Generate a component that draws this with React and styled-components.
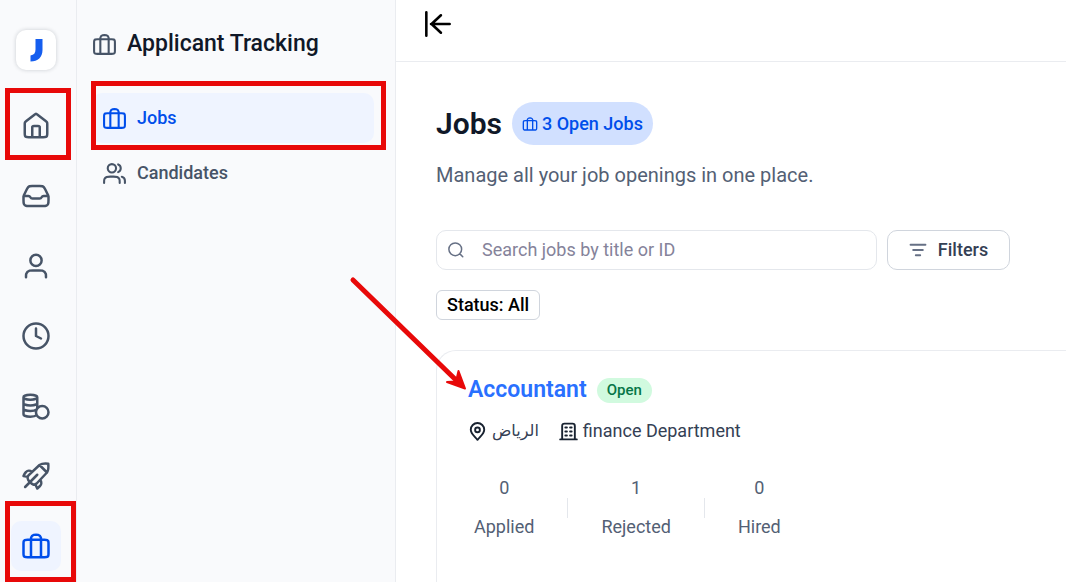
import styled, { createGlobalStyle } from "styled-components";

const GlobalStyle = createGlobalStyle`
    *, *::before, *::after {
        box-sizing: border-box;
    }
    body {
        margin: 0;
        background: #ffffff;
        color: #536074;
        font-family: Roboto, "Noto Sans", "DejaVu Sans", sans-serif;
        font-size: 18px;
        line-height: 24px;
    }
    h1, h2, h3, p, ul, dl, dd {
        margin: 0;
        padding: 0;
    }
    a {
        color: inherit;
        text-decoration: none;
    }
    button, input {
        font: inherit;
    }
`;

const Page = styled.div`
    display: flex;
    min-height: 100vh;
    max-height: 100vh;
    overflow: hidden;
`;

const Svg = styled.svg`
    display: block;
    flex: none;
    width: ${(p) => p.$size || 24}px;
    height: ${(p) => p.$size || 24}px;
    fill: none;
    stroke: currentColor;
    stroke-width: ${(p) => p.$stroke || 2};
    stroke-linecap: round;
    stroke-linejoin: round;
`;

const Rail = styled.nav`
    display: flex;
    flex-direction: column;
    flex: none;
    gap: 31px;
    width: 77px;
    padding: 30px 15px 0 11px;
    background: #f9fafc;
    border-right: 1px solid #eaecf0;
`;

const Logo = styled.a`
    display: flex;
    align-items: center;
    justify-content: center;
    align-self: center;
    width: 40px;
    height: 40px;
    background: #ffffff;
    border-radius: 10px;
    box-shadow: 0 0 4px rgba(16, 24, 40, 0.2);
`;

const RailList = styled.ul`
    display: flex;
    flex-direction: column;
    gap: 20px;
    list-style: none;
`;

const RailItem = styled.li`
    position: relative;
`;

const RailLink = styled.a`
    display: flex;
    align-items: center;
    justify-content: center;
    height: 50px;
    border-radius: 10px;
    color: ${(p) => (p.$active ? "#004eeb" : "#475467")};
    background: ${(p) => (p.$active ? "#eff4ff" : "transparent")};
`;

const Mark = styled.span`
    position: absolute;
    inset: ${(p) => p.$inset};
    z-index: 2;
    border: 5px solid #e80909;
    pointer-events: none;
`;

const Panel = styled.aside`
    flex: none;
    width: 319px;
    padding: 29px 21px 0 15px;
    background: #f9fafc;
    border-right: 1px solid #eaecf0;
`;

const PanelTitle = styled.h2`
    display: flex;
    align-items: center;
    gap: 10px;
    margin-bottom: 34px;
    color: #475467;
    font-size: 23px;
    font-weight: 500;
    line-height: 30px;

    span {
        color: #101828;
    }
`;

const PanelList = styled.ul`
    display: flex;
    flex-direction: column;
    gap: 5px;
    list-style: none;
`;

const PanelItem = styled.li`
    position: relative;
`;

const PanelLink = styled.a`
    display: flex;
    align-items: center;
    gap: 10px;
    height: 50px;
    padding: 0 10px;
    border-radius: 10px;
    font-weight: 500;
    color: ${(p) => (p.$active ? "#004eeb" : "#475467")};
    background: ${(p) => (p.$active ? "#eff4ff" : "transparent")};
`;

const Main = styled.main`
    flex: 1;
    min-width: 0;
`;

const TopBar = styled.header`
    display: flex;
    height: 62px;
    padding: 10px 28px;
    border-bottom: 1px solid #eaecf0;
`;

const IconButton = styled.button`
    align-self: flex-start;
    padding: 0;
    border: 0;
    background: none;
    color: #000000;
`;

const Content = styled.div`
    padding: 40px 0 0 40px;
`;

const Heading = styled.div`
    display: flex;
    align-items: center;
    gap: 10px;
`;

const Title = styled.h1`
    color: #101828;
    font-size: 30px;
    font-weight: 600;
    line-height: 40px;
`;

const CountBadge = styled.span`
    display: flex;
    align-items: center;
    gap: 4px;
    height: 43px;
    padding: 0 10px;
    border-radius: 22px;
    background: #d1e0ff;
    color: #004eeb;
    font-weight: 500;
`;

const Subtitle = styled.p`
    margin-top: 15px;
    font-size: 20px;
    line-height: 30px;
`;

const Toolbar = styled.form`
    display: flex;
    gap: 10px;
    margin: 40px 56px 20px 0;
`;

const SearchBox = styled.label`
    display: flex;
    align-items: center;
    flex: 1;
    gap: 17px;
    height: 40px;
    padding: 0 10px;
    border: 1px solid #e4e7ec;
    border-radius: 10px;
    color: #667085;
`;

const SearchInput = styled.input`
    flex: 1;
    min-width: 0;
    padding: 0;
    border: 0;
    outline: 0;
    background: none;
    color: #101828;

    &::placeholder {
        color: #85839a;
        opacity: 1;
    }
`;

const FilterButton = styled.button`
    display: flex;
    align-items: center;
    justify-content: center;
    gap: 11px;
    width: 123px;
    height: 40px;
    padding: 0;
    border: 1px solid #d0d5dd;
    border-radius: 10px;
    background: #ffffff;
    color: #344054;
    font-weight: 500;

    svg {
        color: #667085;
    }
`;

const StatusButton = styled.button`
    display: block;
    height: 30px;
    padding: 0 10px;
    border: 1px solid #d0d5dd;
    border-radius: 6px;
    background: #ffffff;
    color: #000000;
    font-weight: 500;
    line-height: 26px;
`;

const Card = styled.article`
    height: 300px;
    margin-top: 30px;
    padding: 24px 31px;
    border: 1px solid #eaecf0;
    border-right: 0;
    border-radius: 20px 0 0 20px;
`;

const CardHead = styled.div`
    position: relative;
    display: flex;
    align-items: center;
    gap: 10px;
`;

const JobTitle = styled.h3`
    color: #2970ff;
    font-size: 23px;
    font-weight: 600;
    line-height: 30px;
`;

const OpenBadge = styled.span`
    padding: 0 10px;
    border-radius: 13px;
    background: #d1fadf;
    color: #067647;
    font-size: 15px;
    font-weight: 500;
    line-height: 25px;
`;

const Arrow = styled.svg`
    position: absolute;
    right: 100%;
    bottom: 13px;
    z-index: 3;
    width: 120px;
    height: 118px;
    pointer-events: none;
`;

const Meta = styled.div`
    display: flex;
    gap: 20px;
    margin-top: 14px;
    color: #344054;
`;

const MetaItem = styled.span`
    display: flex;
    align-items: center;
    gap: 5px;

    svg {
        color: #182230;
    }
`;

const City = styled.span`
    font-size: 16px;
`;

const Stats = styled.dl`
    display: flex;
    align-items: center;
    gap: 33px;
    margin: 33px 0 0 6px;
`;

const Stat = styled.div`
    display: flex;
    flex-direction: column-reverse;
    align-items: center;
    gap: 15px;
`;

const Divider = styled.span`
    width: 1px;
    height: 20px;
    background: #e4e7ec;
`;

const icons = {
    home: "M9 21V13.6C9 13.04 9 12.76 9.11 12.55C9.2 12.36 9.36 12.2 9.55 12.11C9.76 12 10.04 12 10.6 12H13.4C13.96 12 14.24 12 14.45 12.11C14.64 12.2 14.8 12.36 14.89 12.55C15 12.76 15 13.04 15 13.6V21M11.02 2.76L4.24 8.04C3.78 8.39 3.56 8.57 3.39 8.79C3.25 8.98 3.14 9.2 3.07 9.44C3 9.7 3 9.99 3 10.57V17.8C3 18.92 3 19.48 3.22 19.91C3.41 20.28 3.72 20.59 4.09 20.78C4.52 21 5.08 21 6.2 21H17.8C18.92 21 19.48 21 19.91 20.78C20.28 20.59 20.59 20.28 20.78 19.91C21 19.48 21 18.92 21 17.8V10.57C21 9.99 21 9.7 20.93 9.44C20.86 9.2 20.75 8.98 20.61 8.79C20.44 8.57 20.22 8.39 19.76 8.04L12.98 2.76C12.63 2.49 12.46 2.35 12.26 2.3C12.09 2.26 11.91 2.26 11.74 2.3C11.54 2.35 11.37 2.49 11.02 2.76Z",
    inbox: "M2.5 12H5.88C6.57 12 7.19 12.39 7.5 13C7.81 13.61 8.43 14 9.12 14H14.88C15.57 14 16.19 13.61 16.5 13C16.81 12.39 17.43 12 18.12 12H21.5M8.97 4H15.03C16.11 4 16.65 4 17.12 4.16C17.54 4.31 17.93 4.55 18.25 4.86C18.6 5.21 18.85 5.69 19.33 6.65L21.49 10.99C21.68 11.36 21.78 11.55 21.84 11.75C21.9 11.93 21.95 12.11 21.97 12.29C22 12.5 22 12.71 22 13.13V15.2C22 16.88 22 17.72 21.67 18.36C21.39 18.93 20.93 19.39 20.36 19.67C19.72 20 18.88 20 17.2 20H6.8C5.12 20 4.28 20 3.64 19.67C3.07 19.39 2.61 18.93 2.33 18.36C2 17.72 2 16.88 2 15.2V13.13C2 12.71 2 12.5 2.03 12.29C2.05 12.11 2.1 11.93 2.16 11.75C2.22 11.55 2.32 11.36 2.51 10.99L4.67 6.65C5.15 5.69 5.4 5.21 5.75 4.86C6.07 4.55 6.46 4.31 6.88 4.16C7.35 4 7.89 4 8.97 4Z",
    user: "M20 21C20 19.6 20 18.91 19.83 18.34C19.44 17.06 18.44 16.06 17.16 15.67C16.59 15.5 15.9 15.5 14.5 15.5H9.5C8.1 15.5 7.41 15.5 6.84 15.67C5.56 16.06 4.56 17.06 4.17 18.34C4 18.91 4 19.6 4 21M16.5 7.5A4.5 4.5 0 1 1 7.5 7.5A4.5 4.5 0 0 1 16.5 7.5Z",
    clock: "M12 6V12L16 14M22 12A10 10 0 1 1 2 12A10 10 0 0 1 22 12Z",
    coins: "M12 17A5 5 0 1 0 22 17A5 5 0 0 0 12 17ZM12 17C12 15.87 12.37 14.84 13 14V5M12 17C12 17.83 12.2 18.6 12.55 19.29C11.71 20 9.77 20.5 7.5 20.5C4.46 20.5 2 19.6 2 18.5V5M13 5C13 6.1 10.54 7 7.5 7C4.46 7 2 6.1 2 5M13 5C13 3.9 10.54 3 7.5 3C4.46 3 2 3.9 2 5M2 14C2 15.1 4.46 16 7.5 16C9.69 16 11.58 15.54 12.46 14.86M13 9.5C13 10.6 10.54 11.5 7.5 11.5C4.46 11.5 2 10.6 2 9.5",
    rocket: "M3.3 20.8L13 11M14.8 3.2L20.8 9.2M6 11.5L14.8 3.2C16.6 2 19 1.9 21.8 2.2C22.1 5 22 7.4 20.8 9.2L12.5 18C10.6 19.8 8.8 18.6 7.2 16.9C5.5 15.2 4.2 13.4 6 11.5ZM8.7 8.6C7.2 7.4 5.2 7.5 4 8.8C3 9.8 2.4 11 2 12L5.4 12.7M15.4 15.3C16.6 16.8 16.5 18.8 15.2 20C14.2 21 13.5 21.5 13 22L11.4 18.6",
    suitcase: "M8 21V7C8 6.07 8 5.6 8.1 5.22C8.38 4.19 9.19 3.38 10.22 3.1C10.6 3 11.07 3 12 3C12.93 3 13.4 3 13.78 3.1C14.81 3.38 15.62 4.19 15.9 5.22C16 5.6 16 6.07 16 7V21M5.2 21H18.8C19.92 21 20.48 21 20.91 20.78C21.28 20.59 21.59 20.28 21.78 19.91C22 19.48 22 18.92 22 17.8V10.2C22 9.08 22 8.52 21.78 8.09C21.59 7.72 21.28 7.41 20.91 7.22C20.48 7 19.92 7 18.8 7H5.2C4.08 7 3.52 7 3.09 7.22C2.72 7.41 2.41 7.72 2.22 8.09C2 8.52 2 9.08 2 10.2V17.8C2 18.92 2 19.48 2.22 19.91C2.41 20.28 2.72 20.59 3.09 20.78C3.52 21 4.08 21 5.2 21Z",
    users: "M22 21V19C22 17.14 20.73 15.57 19 15.13M15.5 3.29C16.97 3.88 18 5.32 18 7C18 8.68 16.97 10.12 15.5 10.71M17 21C17 19.14 17 18.2 16.7 17.47C16.29 16.49 15.51 15.71 14.53 15.3C13.8 15 12.86 15 11 15H8C6.14 15 5.2 15 4.47 15.3C3.49 15.71 2.71 16.49 2.3 17.47C2 18.2 2 19.14 2 21M13.5 7A4 4 0 1 1 5.5 7A4 4 0 0 1 13.5 7Z",
    collapse: "M2 2V22M22 12H6M14.5 4.5L6.5 12L14.5 19.5",
    search: "M21 21L17.2 17.2M19.5 11A8.5 8.5 0 1 1 2.5 11A8.5 8.5 0 0 1 19.5 11Z",
    filter: "M2 5H22M5.5 12H18.5M9 19H15",
    pin: "M12 22.5C15 18.5 20.5 15 20.5 9.8A8.5 8.5 0 0 0 3.5 9.8C3.5 15 9 18.5 12 22.5ZM15 10A3 3 0 1 1 9 10A3 3 0 0 1 15 10Z",
    building: "M1.5 22H22.5M4 22V5C4 3 5 2 7 2H17C19 2 20 3 20 5V22M8 7H10M8 12H10M8 17H10M14 7H16M14 12H16M14 17H16",
};

function Icon({ name, size, stroke }) {
    return (
        <Svg viewBox="0 0 24 24" $size={size} $stroke={stroke} aria-hidden="true">
            <path d={icons[name]} />
        </Svg>
    );
}

const railItems = [
    { name: "Home", icon: "home", mark: "-13px -10px -9px -6px" },
    { name: "Inbox", icon: "inbox" },
    { name: "People", icon: "user" },
    { name: "Time", icon: "clock" },
    { name: "Payroll", icon: "coins" },
    { name: "Performance", icon: "rocket" },
    { name: "Hiring", icon: "suitcase", active: true, mark: "-20px -15px -11px -6px" },
];

const panelItems = [
    { name: "Jobs", icon: "suitcase", active: true, mark: "-12px -12px -7px -1px" },
    { name: "Candidates", icon: "users" },
];

export default function App() {
    return (
        <>
            <GlobalStyle />
            <Page>
                <Rail aria-label="Modules">
                    <Logo href="#" aria-label="Dashboard">
                        <svg width="13" height="23" viewBox="0 0 13 23" aria-hidden="true">
                            <path d="M5.5 0H12.5V11C12.5 18 8 22.5 0.5 22.5V16.5C4 16 5.5 14 5.5 10.5Z" fill="#155eef" />
                        </svg>
                    </Logo>
                    <RailList>
                        {railItems.map((item) => (
                            <RailItem key={item.name}>
                                <RailLink href="#" $active={item.active} aria-label={item.name}>
                                    <Icon name={item.icon} size={30} stroke={2} />
                                </RailLink>
                                {item.mark && <Mark $inset={item.mark} />}
                            </RailItem>
                        ))}
                    </RailList>
                </Rail>

                <Panel>
                    <PanelTitle>
                        <Icon name="suitcase" size={25} stroke={2} />
                        <span>Applicant Tracking</span>
                    </PanelTitle>
                    <PanelList>
                        {panelItems.map((item) => (
                            <PanelItem key={item.name}>
                                <PanelLink href="#" $active={item.active}>
                                    <Icon name={item.icon} size={25} stroke={2} />
                                    {item.name}
                                </PanelLink>
                                {item.mark && <Mark $inset={item.mark} />}
                            </PanelItem>
                        ))}
                    </PanelList>
                </Panel>

                <Main>
                    <TopBar>
                        <IconButton type="button" aria-label="Collapse sidebar">
                            <Icon name="collapse" size={28} stroke={2.2} />
                        </IconButton>
                    </TopBar>
                    <Content>
                        <Heading>
                            <Title>Jobs</Title>
                            <CountBadge>
                                <Icon name="suitcase" size={16} stroke={2} />
                                3 Open Jobs
                            </CountBadge>
                        </Heading>
                        <Subtitle>Manage all your job openings in one place.</Subtitle>

                        <Toolbar>
                            <SearchBox>
                                <Icon name="search" size={18} stroke={2} />
                                <SearchInput type="text" aria-label="Search jobs" placeholder="Search jobs by title or ID" />
                            </SearchBox>
                            <FilterButton type="button">
                                <Icon name="filter" size={18} stroke={2.4} />
                                Filters
                            </FilterButton>
                        </Toolbar>
                        <StatusButton type="button">Status: All</StatusButton>

                        <Card>
                            <CardHead>
                                <Arrow viewBox="0 0 120 118" aria-hidden="true">
                                    <path d="M5 6L109 107" stroke="#e80909" strokeWidth="5" strokeLinecap="round" />
                                    <path
                                        d="M99 108L108 107.5L110.5 97L117 114.5Z"
                                        fill="#e80909"
                                        stroke="#e80909"
                                        strokeWidth="2"
                                        strokeLinejoin="round"
                                    />
                                </Arrow>
                                <JobTitle>
                                    <a href="#">Accountant</a>
                                </JobTitle>
                                <OpenBadge>Open</OpenBadge>
                            </CardHead>
                            <Meta>
                                <MetaItem>
                                    <Icon name="pin" size={19} stroke={2.4} />
                                    <City lang="ar">الرياض</City>
                                </MetaItem>
                                <MetaItem>
                                    <Icon name="building" size={19} stroke={2.4} />
                                    finance Department
                                </MetaItem>
                            </Meta>
                            <Stats>
                                <Stat>
                                    <dt>Applied</dt>
                                    <dd>0</dd>
                                </Stat>
                                <Divider />
                                <Stat>
                                    <dt>Rejected</dt>
                                    <dd>1</dd>
                                </Stat>
                                <Divider />
                                <Stat>
                                    <dt>Hired</dt>
                                    <dd>0</dd>
                                </Stat>
                            </Stats>
                        </Card>
                    </Content>
                </Main>
            </Page>
        </>
    );
}
